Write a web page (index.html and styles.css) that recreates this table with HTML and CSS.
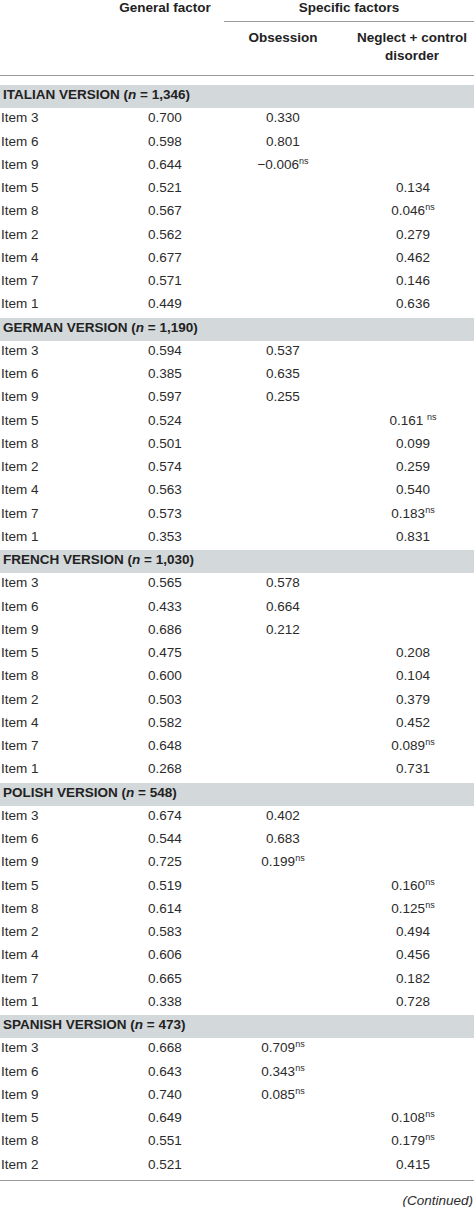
FILE: index.html
```html
<!DOCTYPE html>
<html lang="en">
<head>
<meta charset="utf-8">
<title>Factor loadings</title>
<link rel="stylesheet" href="styles.css">
</head>
<body>
<table class="tbl">
<colgroup><col class="c1"><col class="c2"><col class="c3"><col class="c4"></colgroup>
<thead>
<tr class="h1"><th rowspan="2"></th><th rowspan="2" class="gen">General factor</th><th colspan="2" class="spec">Specific factors</th></tr>
<tr class="h2"><th>Obsession</th><th class="neg">Neglect + control disorder</th></tr>
<tr class="gap"><td colspan="4"><div class="gapfill"></div></td></tr>
</thead>
<tbody>
<tr class="sec"><td colspan="4">ITALIAN VERSION (<i>n</i> = 1,346)</td></tr>
<tr><td class="item">Item 3</td><td>0.700</td><td>0.330</td><td class="v4"></td></tr>
<tr><td class="item">Item 6</td><td>0.598</td><td>0.801</td><td class="v4"></td></tr>
<tr><td class="item">Item 9</td><td>0.644</td><td>−0.006<sup class="ns">ns</sup></td><td class="v4"></td></tr>
<tr><td class="item">Item 5</td><td>0.521</td><td></td><td class="v4">0.134</td></tr>
<tr><td class="item">Item 8</td><td>0.567</td><td></td><td class="v4">0.046<sup class="ns">ns</sup></td></tr>
<tr><td class="item">Item 2</td><td>0.562</td><td></td><td class="v4">0.279</td></tr>
<tr><td class="item">Item 4</td><td>0.677</td><td></td><td class="v4">0.462</td></tr>
<tr><td class="item">Item 7</td><td>0.571</td><td></td><td class="v4">0.146</td></tr>
<tr><td class="item">Item 1</td><td>0.449</td><td></td><td class="v4">0.636</td></tr>
<tr class="sec"><td colspan="4">GERMAN VERSION (<i>n</i> = 1,190)</td></tr>
<tr><td class="item">Item 3</td><td>0.594</td><td>0.537</td><td class="v4"></td></tr>
<tr><td class="item">Item 6</td><td>0.385</td><td>0.635</td><td class="v4"></td></tr>
<tr><td class="item">Item 9</td><td>0.597</td><td>0.255</td><td class="v4"></td></tr>
<tr><td class="item">Item 5</td><td>0.524</td><td></td><td class="v4">0.161 <sup class="ns">ns</sup></td></tr>
<tr><td class="item">Item 8</td><td>0.501</td><td></td><td class="v4">0.099</td></tr>
<tr><td class="item">Item 2</td><td>0.574</td><td></td><td class="v4">0.259</td></tr>
<tr><td class="item">Item 4</td><td>0.563</td><td></td><td class="v4">0.540</td></tr>
<tr><td class="item">Item 7</td><td>0.573</td><td></td><td class="v4">0.183<sup class="ns">ns</sup></td></tr>
<tr><td class="item">Item 1</td><td>0.353</td><td></td><td class="v4">0.831</td></tr>
<tr class="sec"><td colspan="4">FRENCH VERSION (<i>n</i> = 1,030)</td></tr>
<tr><td class="item">Item 3</td><td>0.565</td><td>0.578</td><td class="v4"></td></tr>
<tr><td class="item">Item 6</td><td>0.433</td><td>0.664</td><td class="v4"></td></tr>
<tr><td class="item">Item 9</td><td>0.686</td><td>0.212</td><td class="v4"></td></tr>
<tr><td class="item">Item 5</td><td>0.475</td><td></td><td class="v4">0.208</td></tr>
<tr><td class="item">Item 8</td><td>0.600</td><td></td><td class="v4">0.104</td></tr>
<tr><td class="item">Item 2</td><td>0.503</td><td></td><td class="v4">0.379</td></tr>
<tr><td class="item">Item 4</td><td>0.582</td><td></td><td class="v4">0.452</td></tr>
<tr><td class="item">Item 7</td><td>0.648</td><td></td><td class="v4">0.089<sup class="ns">ns</sup></td></tr>
<tr><td class="item">Item 1</td><td>0.268</td><td></td><td class="v4">0.731</td></tr>
<tr class="sec"><td colspan="4">POLISH VERSION (<i>n</i> = 548)</td></tr>
<tr><td class="item">Item 3</td><td>0.674</td><td>0.402</td><td class="v4"></td></tr>
<tr><td class="item">Item 6</td><td>0.544</td><td>0.683</td><td class="v4"></td></tr>
<tr><td class="item">Item 9</td><td>0.725</td><td>0.199<sup class="ns">ns</sup></td><td class="v4"></td></tr>
<tr><td class="item">Item 5</td><td>0.519</td><td></td><td class="v4">0.160<sup class="ns">ns</sup></td></tr>
<tr><td class="item">Item 8</td><td>0.614</td><td></td><td class="v4">0.125<sup class="ns">ns</sup></td></tr>
<tr><td class="item">Item 2</td><td>0.583</td><td></td><td class="v4">0.494</td></tr>
<tr><td class="item">Item 4</td><td>0.606</td><td></td><td class="v4">0.456</td></tr>
<tr><td class="item">Item 7</td><td>0.665</td><td></td><td class="v4">0.182</td></tr>
<tr><td class="item">Item 1</td><td>0.338</td><td></td><td class="v4">0.728</td></tr>
<tr class="sec"><td colspan="4">SPANISH VERSION (<i>n</i> = 473)</td></tr>
<tr><td class="item">Item 3</td><td>0.668</td><td>0.709<sup class="ns">ns</sup></td><td class="v4"></td></tr>
<tr><td class="item">Item 6</td><td>0.643</td><td>0.343<sup class="ns">ns</sup></td><td class="v4"></td></tr>
<tr><td class="item">Item 9</td><td>0.740</td><td>0.085<sup class="ns">ns</sup></td><td class="v4"></td></tr>
<tr><td class="item">Item 5</td><td>0.649</td><td></td><td class="v4">0.108<sup class="ns">ns</sup></td></tr>
<tr><td class="item">Item 8</td><td>0.551</td><td></td><td class="v4">0.179<sup class="ns">ns</sup></td></tr>
<tr><td class="item">Item 2</td><td>0.521</td><td></td><td class="v4">0.415</td></tr>
</tbody>
</table>
<div class="foot"><p class="cont">(Continued)</p></div>
</body>
</html>
```
FILE: styles.css
```css
html, body {
  margin: 0;
  padding: 0;
  background: #ffffff;
  overflow-x: hidden;
}
body {
  font-family: "Liberation Sans", Arial, sans-serif;
  font-size: 13.5px;
  color: #2b2b2b;
}
.tbl {
  width: 474px;
  border-collapse: separate;
  border-spacing: 0;
  table-layout: fixed;
}
.c1 { width: 106px; }
.c2 { width: 118px; }
.c3 { width: 118px; }
.c4 { width: 132px; }

th {
  font-weight: bold;
  padding: 0;
  text-align: center;
  vertical-align: top;
  line-height: 15px;
  color: #222;
}
.h1 .spec {
  padding-bottom: 6px;
  border-bottom: 1px solid #9a9a9a;
}
.h2 th {
  padding-top: 7px;
  padding-bottom: 10px;
  line-height: 18px;
}
.h2 .neg {
  padding-left: 8px;
}
.gap td {
  padding: 0;
  border-top: 1px solid #9a9a9a;
  line-height: 0;
}
.gapfill {
  height: 9px;
}

tbody td {
  padding: 0 0 3px 0;
  line-height: 20.25px;
  text-align: center;
  vertical-align: middle;
  white-space: nowrap;
}
tbody td.item {
  text-align: left;
  padding-left: 1px;
}
tbody td.v4 {
  padding-left: 10px;
}
.sec td {
  background: #d3d8da;
  font-weight: bold;
  text-align: left;
  padding: 0 0 3px 3px;
  color: #222;
}
.ns {
  font-size: 9px;
  line-height: 0;
  vertical-align: 5px;
}

.foot {
  margin-top: 2px;
  border-top: 1px solid #9a9a9a;
}
.cont {
  margin: 0;
  padding: 12px 1px 0 0;
  text-align: right;
  font-style: italic;
  line-height: 15px;
}
```
